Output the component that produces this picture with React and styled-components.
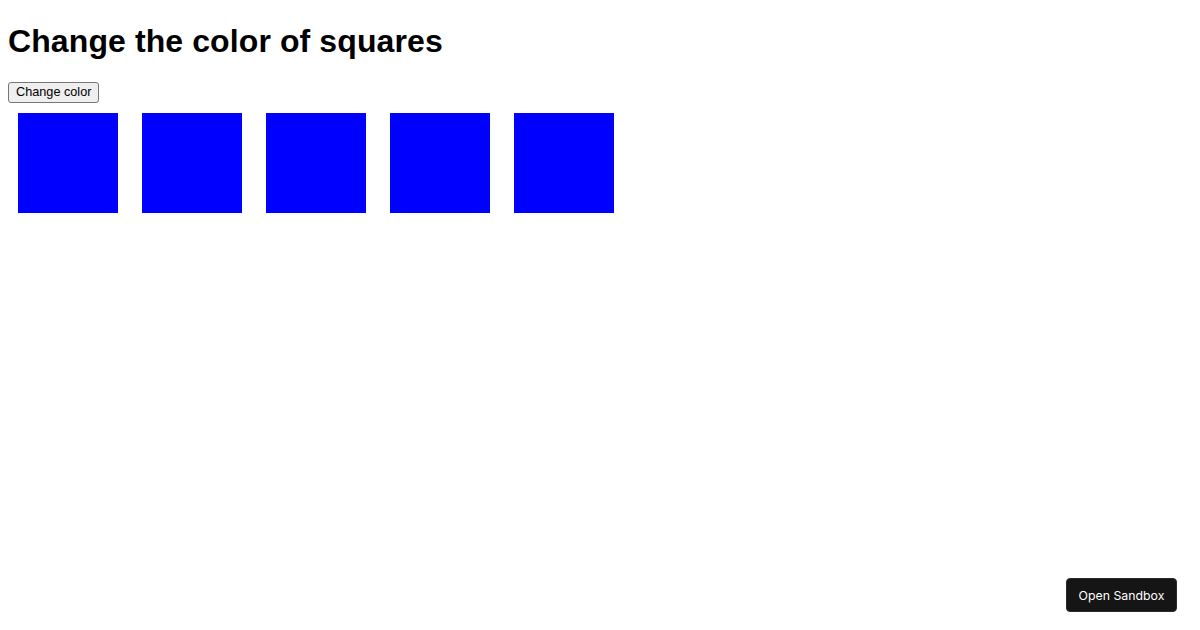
import React from "react";
import styled, { createGlobalStyle } from "styled-components";

const GlobalStyle = createGlobalStyle`
  body {
    margin: 8px;
    font-family: "Liberation Sans", Arial, sans-serif;
    background: #fff;
    color: #000;
  }
`;

const squares = [1, 2, 3, 4, 5];

const App = () => {
  return (
    <>
      <GlobalStyle />
      <Title>Change the color of squares</Title>
      <ChangeButton type="button">Change color</ChangeButton>
      <SquareRow>
        {squares.map((id) => (
          <Square key={id} color="blue" />
        ))}
      </SquareRow>
      <SandboxButton type="button">Open Sandbox</SandboxButton>
    </>
  );
};

export default App;

// Styled Components
const Title = styled.h1`
  font-family: "Liberation Sans", Arial, sans-serif;
  font-size: 32px;
  font-weight: 700;
  letter-spacing: 0.1px;
  margin: 15.44px 0 21.44px;
`;

const ChangeButton = styled.button`
  display: block;
  white-space: nowrap;
  font-family: "Liberation Sans", Arial, sans-serif;
  font-size: 12.7px;
  padding: 1px 7px;
  height: 21px;
  color: #000;
  background: #efefef;
  border: 1px solid #767676;
  border-radius: 3px;
`;

const SquareRow = styled.div`
  display: flex;
  gap: 4px;
`;

const Square = styled.div`
  width: 100px;
  height: 100px;
  margin: 10px;
  background: ${(p) => p.color};
`;

const SandboxButton = styled.button`
  position: fixed;
  right: 23px;
  bottom: 18px;
  width: 111px;
  height: 34px;
  background: #151515;
  color: #fff;
  border: 1px solid #2a2a2a;
  border-radius: 4px;
  font-family: Inter, "Liberation Sans", sans-serif;
  font-size: 12.3px;
`;
